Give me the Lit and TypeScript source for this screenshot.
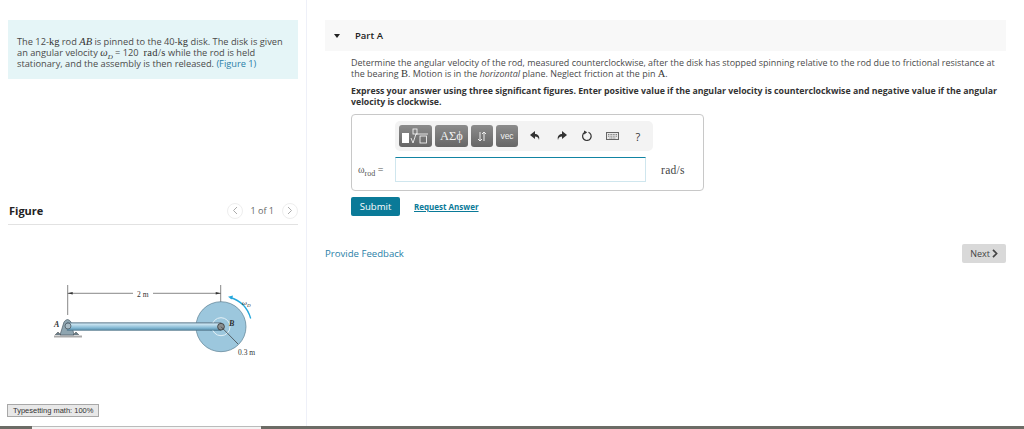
import { LitElement, html, css, svg } from "lit";
import { customElement } from "lit/decorators.js";

const figure = svg`
<svg class="fig" viewBox="0 0 240 110" width="240" height="110">
  <defs>
    <linearGradient id="rod" x1="0" y1="0" x2="0" y2="1">
      <stop offset="0" stop-color="#7d97a8"/><stop offset=".25" stop-color="#c3e0ee"/>
      <stop offset=".7" stop-color="#7fb6d2"/><stop offset="1" stop-color="#4d7f9a"/>
    </linearGradient>
  </defs>
  <g stroke="#555" stroke-width=".7" fill="none">
    <path d="M27.7 10V40M180.7 10V40M27.7 18.3H93M113 18.3H180.7"/>
  </g>
  <path d="M27.7 18.3l5-1.2v2.4zM180.7 18.3l-5-1.2v2.4z" fill="#333"/>
  <text x="97" y="21.5" class="t">2 m</text>
  <circle cx="181" cy="51.7" r="25" fill="#9cc7dd" stroke="#5c7f92" stroke-width=".7"/>
  <path d="M14 61.5H42" stroke="#aaa" stroke-width="2"/>
  <path d="M20 60L24 47Q27.5 42 31 47L34 60Z" fill="#8fa5b0" stroke="#4a5a64" stroke-width=".7"/>
  <path d="M15 60l3-3 3 3M33 60l3-3 3 3" fill="#6b7e88" stroke="#444" stroke-width=".5"/>
  <rect x="27" y="47.5" width="154" height="8" fill="url(#rod)" stroke="#5a7485" stroke-width=".4"/>
  <circle cx="28" cy="51" r="3" fill="#a9bcc6" stroke="#3f4d56" stroke-width=".7"/>
  <circle cx="181" cy="51.7" r="9" fill="none" stroke="#e4f1f7" stroke-width="1"/>
  <rect x="170" y="47.5" width="11" height="8" fill="url(#rod)"/>
  <circle cx="181" cy="51.7" r="3.4" fill="#8a8f90" stroke="#333" stroke-width=".8"/>
  <path d="M181 51.7L198 69" stroke="#333" stroke-width=".7"/>
  <path d="M190 22.5Q206 27 210.7 43.5" stroke="#25a7dc" stroke-width="1.3" fill="none"/>
  <path d="M188 21.8l5-1.4-1 4z" fill="#25a7dc"/>
  <text x="14" y="52" class="i b">A</text>
  <text x="189" y="51" class="i b">B</text>
  <text x="202" y="30" class="i s">ω<tspan dy="1.5" font-size="5">D</tspan></text>
  <text x="198" y="80" class="t">0.3 m</text>
</svg>`;

@customElement("app-root")
export class AppRoot extends LitElement {
  static styles = css`
    :host { display: block; position: relative; width: 1024px; height: 429px; overflow: hidden; background: #fff;
      font-family: "Open Sans", "Noto Sans", sans-serif; font-size: 8.95px; color: #4a4a4a; line-height: 11px; }
    .page { display: grid; grid-template-columns: 307px minmax(0, 1fr); height: 426px; }
    .left { border-right: 1px solid #eef0f8; padding: 20px 8px 0; box-sizing: border-box; }
    .intro { background: #e5f5f7; height: 59px; box-sizing: border-box; padding: 16px 9px 0; width: 290px; white-space: nowrap; font-size: 9.25px; }
    .m { font-family: "Liberation Serif", serif; font-size: 10.5px; color: #333; line-height: 10px; }
    .mw { letter-spacing: .35px; }
    .mi { font-style: italic; }
    sub { font-size: 7px; line-height: 0; }
    .link { color: #2b7fa8; }
    .fighead { display: flex; align-items: center; justify-content: space-between; margin-top: 121px; height: 21px; width: 290px; border-bottom: 1px solid #e2e2e2; padding: 0 0 3px 1px; box-sizing: border-box; height: 25px; }
    .fighead b { font-size: 11px; color: #222; }
    .pager { display: flex; align-items: center; gap: 8px; color: #666; font-size: 9px; }
    .circ { width: 16px; height: 16px; border: 1px solid #eee; border-radius: 50%; box-sizing: border-box; display: flex; align-items: center; justify-content: center; }
    .fig { display: block; margin: 50px 0 0 32px; }
    .fig .t { font: 7.5px "Liberation Serif", serif; fill: #333; }
    .fig .i { font: italic 8px "Liberation Serif", serif; fill: #333; }
    .fig .b { font-weight: bold; }
    .fig .s { font-size: 7px; }
    .status { position: absolute; left: 7px; top: 404px; width: 92px; height: 13px; box-sizing: border-box; background: #e8e8e8; border: 1px solid #a8a8a8; font: 7.5px/11px "Liberation Sans", sans-serif; color: #333; padding-left: 5px; white-space: nowrap; }
    .right { padding: 20px 18px 0; position: relative; }
    .parthead { background: #f8f8f8; height: 31px; display: flex; align-items: center; gap: 15px; padding: 0 0 0 9px; font-weight: 600; color: #222; font-size: 9.5px; }
    .tri { width: 0; height: 0; border-left: 3.5px solid transparent; border-right: 3.5px solid transparent; border-top: 4px solid #222; }
    .body { padding-left: 26px; }
    .q { margin: 6px 0 0; white-space: nowrap; }
    .ins { margin: 7px 0 0; font-weight: 700; color: #333; font-size: 8.76px; white-space: nowrap; }
    .ansbox { width: 353px; height: 77px; box-sizing: border-box; border: 1px solid #c8c8c8; border-radius: 4px; margin-top: 6px; padding: 6px 0 0 43px; }
    .toolbar { width: 258px; height: 30px; box-sizing: border-box; background: #f3f3f3; border-radius: 5px; display: flex; align-items: center; padding-left: 4px; }
    .tb { height: 22px; background: linear-gradient(#8c8c8c, #666); border-radius: 3px; color: #f2f2f2; display: flex; align-items: center; justify-content: center; box-sizing: border-box; margin-right: 3px; }
    .tb.sym { font: 12.5px "Liberation Serif", serif; }
    .tb.vec { font: 8.5px "Liberation Sans", sans-serif; }
    .w33 { width: 33px; }
    .w22 { width: 22px; }
    .tic { width: 25.5px; display: flex; justify-content: center; align-items: center; color: #333; font-size: 11px; }
    .first { margin-left: 2px; }
    .ansrow { display: flex; align-items: center; margin: 6px 0 0 -37px; }
    .lab { width: 37px; font: 10px "Liberation Serif", serif; color: #555; white-space: nowrap; }
    .lab sub { font-size: 8px; }
    .inp { width: 251px; height: 25px; box-sizing: border-box; border: 1px solid #cfe6ee; border-top-color: #1184a3; background: #fff; }
    .unit { font: 11.5px "Liberation Serif", serif; letter-spacing: .3px; color: #444; margin-left: 15px; }
    .actions { display: flex; align-items: center; margin-top: 6px; gap: 14px; }
    .submit { width: 49px; height: 19px; background: #0a7a98; color: #fff; border-radius: 2px; display: flex; align-items: center; justify-content: center; font-size: 9.6px; }
    .req { color: #0a7a98; font-weight: 700; font-size: 8px; text-decoration: underline; }
    .foot { display: flex; justify-content: space-between; align-items: center; margin-top: 28px; height: 19px; }
    .fb { color: #2b7fa8; font-size: 9.6px; }
    .next { width: 44px; height: 19px; background: #d9d9d9; border-radius: 2px; display: flex; align-items: center; justify-content: center; gap: 2px; color: #444; font-size: 9px; }
    .strip { position: absolute; left: 0; right: 0; top: 426px; height: 3px; display: grid; grid-template-columns: 32px 229px 1fr; }
    .d { background: #6c6c66; } .l { background: #f4f4f4; border-top: 1px solid #bbb; box-sizing: border-box; }
  `;

  render() {
    return html`
      <div class="page">
        <div class="left">
          <div class="intro">
            The 12-<span class="m">kg</span> rod <span class="m mi">AB</span> is pinned to the 40-<span class="m">kg</span> disk. The disk is given<br />
            an angular velocity <span class="m mi">ω<sub>D</sub></span> = 120 &nbsp;<span class="m mw">rad/s</span> while the rod is held<br />
            stationary, and the assembly is then released. <span class="link">(Figure 1)</span>
          </div>
          <div class="fighead">
            <b>Figure</b>
            <div class="pager">
              <span class="circ"><svg width="6" height="9" viewBox="0 0 6 9"><path d="M5 1L1.5 4.5 5 8" fill="none" stroke="#aaa" stroke-width="1"/></svg></span>
              <span>1 of 1</span>
              <span class="circ"><svg width="6" height="9" viewBox="0 0 6 9"><path d="M1 1L4.5 4.5 1 8" fill="none" stroke="#aaa" stroke-width="1"/></svg></span>
            </div>
          </div>
          ${figure}
        </div>
        <div class="right">
          <div class="parthead"><span class="tri"></span><span>Part A</span></div>
          <div class="body">
            <p class="q">Determine the angular velocity of the rod, measured counterclockwise, after the disk has stopped spinning relative to the rod due to frictional resistance at<br />
            the bearing <span class="m">B</span>. Motion is in the <i>horizontal</i> plane. Neglect friction at the pin <span class="m">A</span>.</p>
            <p class="ins">Express your answer using three significant figures. Enter positive value if the angular velocity is counterclockwise and negative value if the angular<br />velocity is clockwise.</p>
            <div class="ansbox">
              <div class="toolbar">
                <span class="tb w33">
                  <svg width="27" height="16" viewBox="0 0 27 16"><rect x="0" y="5" width="7" height="10" fill="#fff"/><rect x="11" y="1" width="4" height="5" fill="none" stroke="#fff" stroke-width=".8"/><path d="M9 10l2 5 3-9h12" fill="none" stroke="#fff" stroke-width=".8"/><rect x="18" y="8" width="6.5" height="7" fill="none" stroke="#fff" stroke-width=".8"/></svg>
                </span>
                <span class="tb sym w33">ΑΣϕ</span>
                <span class="tb w22"><svg width="10" height="11" viewBox="0 0 10 11"><path d="M3 1v9M1 8l2 2 2-2M7 10V1M5 3l2-2 2 2" fill="none" stroke="#eee" stroke-width="1"/></svg></span>
                <span class="tb vec w22">vec</span>
                <span class="tic first"><svg width="11" height="10" viewBox="0 0 11 10"><path d="M5 0L0 4l5 4V5.5c2 0 3.5.8 4 3.5 1-3.5-1-6-4-6z" fill="#333"/></svg></span>
                <span class="tic"><svg width="11" height="10" viewBox="0 0 11 10"><path d="M6 0l5 4-5 4V5.5c-2 0-3.5.8-4 3.5-1-3.5 1-6 4-6z" fill="#333"/></svg></span>
                <span class="tic"><svg width="12" height="12" viewBox="0 0 12 12"><path d="M7.5 2.2A4.3 4.3 0 1 1 3.5 2.6" fill="none" stroke="#333" stroke-width="1.2"/><path d="M3 .5l3.2 1.8L3.2 4.6z" fill="#333"/></svg></span>
                <span class="tic"><svg width="13" height="8" viewBox="0 0 13 8"><rect x=".5" y=".5" width="12" height="7" fill="#e8e8e8" stroke="#666"/><path d="M2 2.5h9M2 4.2h9M3.5 6h6" stroke="#666" stroke-width=".8" stroke-dasharray="1 .6"/></svg></span>
                <span class="tic">?</span>
              </div>
              <div class="ansrow">
                <span class="lab">ω<sub>rod</sub> =</span>
                <div class="inp"></div>
                <span class="unit">rad/s</span>
              </div>
            </div>
            <div class="actions"><div class="submit">Submit</div><span class="req">Request Answer</span></div>
          </div>
          <div class="foot">
            <span class="fb">Provide Feedback</span>
            <div class="next">Next <svg width="6" height="9" viewBox="0 0 6 9"><path d="M1 .8L4.6 4.5 1 8.2" fill="none" stroke="#444" stroke-width="1.7"/></svg></div>
          </div>
        </div>
      </div>
      <div class="status">Typesetting math: 100%</div>
      <div class="strip"><div class="d"></div><div class="l"></div><div class="d"></div></div>
    `;
  }
}
